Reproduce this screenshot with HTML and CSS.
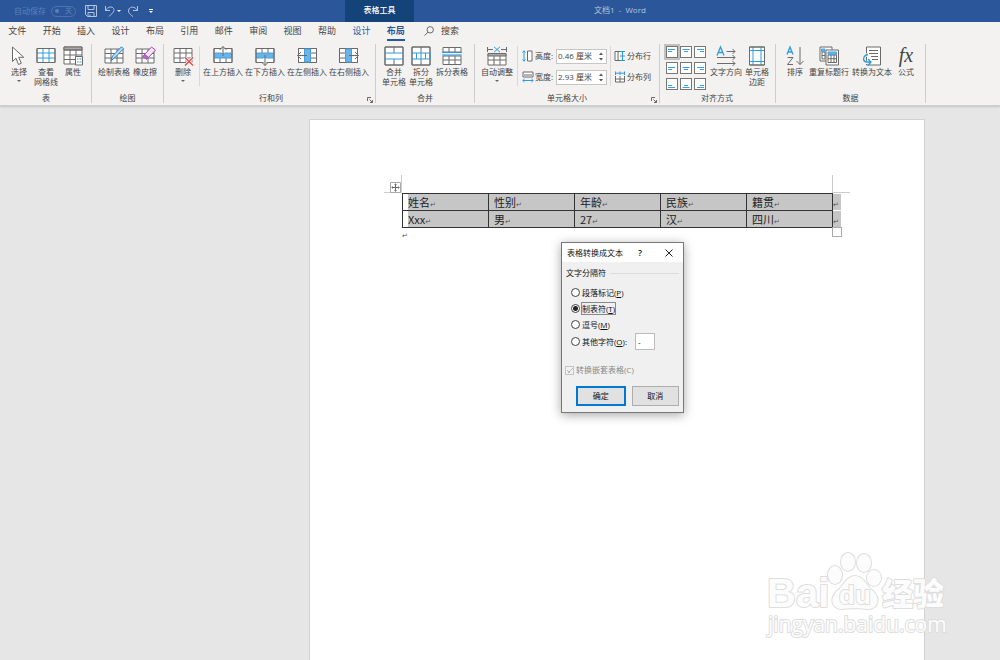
FILE: index.html
```html
<!DOCTYPE html>
<html lang="zh-CN">
<head>
<meta charset="utf-8">
<title>文档1 - Word</title>
<meta name="viewport" content="width=device-width">
<link rel="stylesheet" href="styles.css">
</head>
<body>
<header class="titlebar">
	<div class="quick">
		<span class="autosave">自动保存</span>
		<button class="toggle" aria-label="自动保存"><i></i>关</button>
		<button class="save" aria-label="保存"><svg width="12" height="12" viewBox="0 0 12 12"><path d="M.5.5h11v11h-9l-2-2zM3 .5v4h6v-4M3 11.500v-4h6v4M5 9.500v2"/></svg></button>
		<button class="undo" aria-label="撤消"><svg width="12" height="12" viewBox="0 0 12 12"><path d="M1.500 1v4.500h4.500M1.500 5.500C4 1.500 8 1 9.500 3.500s-.5 4-4.500 8"/></svg></button>
		<i class="caret"></i>
		<button class="redo" aria-label="恢复"><svg width="12" height="12" viewBox="0 0 12 12"><path d="M10.500 1v4.500H6M10.500 5.500C8 1.500 3.500 1 2 4s.5 5 4 7.500"/></svg></button>
		<button class="more" aria-label="自定义"><i class="caret"></i></button>
	</div>
	<div class="context">表格工具</div>
	<h1>文档1&nbsp; -&nbsp; Word</h1>
</header>
<nav class="tabs">
	<div class="tablist">
		<a href="#">文件</a>
		<a href="#">开始</a>
		<a href="#">插入</a>
		<a href="#">设计</a>
		<a href="#">布局</a>
		<a href="#">引用</a>
		<a href="#">邮件</a>
		<a href="#">审阅</a>
		<a href="#">视图</a>
		<a href="#">帮助</a>
		<a href="#" class="tool">设计</a>
		<a href="#" class="tool active">布局</a>
	</div>
	<a href="#" class="search"><svg width="10" height="10" viewBox="0 0 10 10"><circle cx="6.200" cy="3.800" r="3.200"/><path d="M4 6.200L.5 9.500"/></svg>搜索</a>
</nav>
<div class="ribbon">
	<section class="group g-table">
		<div class="tools">
			<button class="tool-btn"><svg viewBox="0 0 20 20"><path class="w" d="M3.500 1v14.500l3.500-3.300 2.500 6.300 2.800-1.200-2.600-6h5z"/></svg>选择<i class="caret"></i></button>
			<button class="tool-btn"><svg viewBox="0 0 20 20"><path class="w" d="M1 2.500h18v14H1z"/><path class="b" d="M7 2.500v14M13 2.500v14M1 7h18M1 12h18"/><path d="M1 2.500h18v14H1z"/></svg>查看<br>网格线</button>
			<button class="tool-btn"><svg viewBox="0 0 20 20"><path class="w" d="M1 1h18v17H1z"/><path class="gr" d="M1 1h18v3H1z"/><path d="M1 4h18M1 9h18M1 13.500h18M7 4v14M13 4v14"/><path class="w" d="M12.500 10.500h7v8.500h-7z"/><path class="b" d="M14 13h1.500M16.500 13h2M14 16h1.500M16.500 16h2"/></svg>属性</button>
		</div>
		<h2>表</h2>
	</section>
	<section class="group g-draw">
		<div class="tools">
			<button class="tool-btn"><svg viewBox="0 0 20 20"><path class="w" d="M1 3h18v14H1z"/><path d="M7 3v14M13 3v14M1 7.500h18M1 12h18"/><path class="bf" d="M7 14.500l1.500-4.500L17.500.8l2 2L10.500 12z"/></svg>绘制表格</button>
			<button class="tool-btn"><svg viewBox="0 0 20 20"><path class="w" d="M1 3h18v14H1z"/><path d="M7 3v14M13 3v14M1 7.500h18M1 12h18"/><path class="pu" d="M9.500 8.500l7-7.500 4 3-7 7.500z"/><path class="pf" d="M9.500 8.500l4 3-2 1.800-3.800-2.600z"/></svg>橡皮擦</button>
		</div>
		<h2>绘图</h2>
	</section>
	<section class="group g-rows">
		<div class="tools">
			<button class="tool-btn"><svg viewBox="0 0 20 20"><path class="w" d="M1 2.500h18v14H1z"/><path d="M7 2.500v14M13 2.500v14M1 7h18M1 12h18"/><path class="halo" d="M12 11.500l8 8M20 11.500l-8 8"/><path class="r" d="M12 11.500l8 8M20 11.500l-8 8"/></svg>删除<i class="caret"></i></button>
			<span class="rule"></span>
			<button class="tool-btn"><svg viewBox="0 0 20 20"><path class="w" d="M1 2.500h18v14H1z"/><path d="M7 12v4.500M13 12v4.500"/><path class="fill" d="M1.500 7h17v5h-17z"/><path class="halo" d="M10 0v7"/><path d="M7 2.500H1v14h18v-14h-6M10 10V.5M6.500 4L10 .5 13.500 4"/></svg>在上方插入</button>
			<button class="tool-btn"><svg viewBox="0 0 20 20"><path class="w" d="M1 2.500h18v14H1z"/><path d="M7 2.500V7M13 2.500V7"/><path class="fill" d="M1.500 7h17v5h-17z"/><path class="halo" d="M10 12v7"/><path d="M7 16.500H1v-14h18v14h-6M10 9v10.500M6.500 16l3.500 3.500 3.500-3.500"/></svg>在下方插入</button>
			<button class="tool-btn"><svg viewBox="0 0 20 20"><path class="w" d="M1.500 2.500h18v14h-18z"/><path d="M14 7h5.500M14 12h5.500M1.500 2.500h18v14h-18z"/><path class="fill" d="M7.500 3h6v13h-6z"/><path class="halo" d="M1 9.500h6"/><path d="M10 9.500H.5M4 6L.5 9.500 4 13"/></svg>在左侧插入</button>
			<button class="tool-btn"><svg viewBox="0 0 20 20"><path class="w" d="M.5 2.500h18v14H.5z"/><path d="M.5 7H6M.5 12H6M.5 2.500h18v14H.5z"/><path class="fill" d="M6.500 3h6v13h-6z"/><path class="halo" d="M13 9.500h6"/><path d="M10 9.500h9.500M16 6l3.500 3.500L16 13"/></svg>在右侧插入</button>
		</div>
		<h2>行和列</h2>
		<button class="launch" aria-label="表格选项"><svg width="6" height="6" viewBox="0 0 6 6"><path d="M.5 4V.5H4M2.500 2.500l3 3M5.500 3v2.500H3"/></svg></button>
	</section>
	<section class="group g-merge">
		<div class="tools">
			<button class="tool-btn"><svg viewBox="0 0 20 20"><path class="w" d="M1 1h18v18H1z"/><path d="M10 1v6M10 13v6M1 1h18v18H1z"/><path class="b" d="M1 7h18M1 13h18"/></svg>合并<br>单元格</button>
			<button class="tool-btn"><svg viewBox="0 0 20 20"><path class="w" d="M1 1h18v18H1z"/><path d="M10 1v6M10 13v6M1 1h18v18H1z"/><path class="b" d="M1 7h18v6H1M5.500 7v6M10 7v6M14.500 7v6"/></svg>拆分<br>单元格</button>
			<button class="tool-btn"><svg viewBox="0 0 20 20"><path class="w" d="M1 1.500h18V6H1zM1 10h18v8.500H1z"/><path d="M7 1.500V6M13 1.500V6M7 10v8.500M13 10v8.500M1 14h18"/><path class="b" d="M0 6.500h20M0 9h20"/></svg>拆分表格</button>
		</div>
		<h2>合并</h2>
	</section>
	<section class="group g-size">
		<div class="tools">
			<button class="tool-btn"><svg viewBox="0 0 20 20"><path class="w" d="M1 8h18v11H1z"/><path class="gr" d="M1 7.500h18v2.500H1z"/><path d="M7 10v9M13 10v9M1 14h18M.5 1v5M19.500 1v5M1 3.500h5M14 3.500h5"/><path class="b" d="M7 .8l6 5.400M13 .8L7 6.200"/></svg>自动调整<i class="caret"></i></button>
			<span class="rule"></span>
			<div class="sizes">
				<div class="size">
					<svg width="12" height="12" viewBox="0 0 12 12"><path class="w" d="M5.500 1h4.500v10H5.500z"/><path class="b" d="M2 .8v10.400M.5 2.500L2 .8l1.500 1.700M.5 9.500L2 11.200l1.500-1.700"/></svg>
					<label for="height">高度:</label>
					<span class="spin"><input id="height" type="text" value="0.46 厘米"><svg width="4" height="9" viewBox="0 0 4 9"><path d="M0 3l2-2.500L4 3zM0 6l2 2.500L4 6z"/></svg></span>
				</div>
				<div class="size">
					<svg width="12" height="12" viewBox="0 0 12 12"><path class="w" d="M1 6V1h10v5zM2 4h8"/><path class="b" d="M.8 9.500h10.400M2.500 8L.8 9.500l1.700 1.500M9.500 8l1.700 1.500L9.500 11"/></svg>
					<label for="width">宽度:</label>
					<span class="spin"><input id="width" type="text" value="2.93 厘米"><svg width="4" height="9" viewBox="0 0 4 9"><path d="M0 3l2-2.500L4 3zM0 6l2 2.500L4 6z"/></svg></span>
				</div>
			</div>
			<span class="rule"></span>
			<div class="sizes">
				<button class="dist"><svg width="12" height="12" viewBox="0 0 12 12"><path class="w" d="M6 1.500H1v9h5M4 1.500v9"/><path class="b" d="M6 1.500h5M6 6h5M6 10.500h5M8.500 1.500v9"/></svg>分布行</button>
				<button class="dist"><svg width="12" height="12" viewBox="0 0 12 12"><path class="w" d="M1.500 5v6h9V5M6 5v6M1.500 8h9"/><path class="b" d="M1.500.5V4M6 .5V4M10.500.5V4M1.500 2.200h9"/></svg>分布列</button>
			</div>
		</div>
		<h2>单元格大小</h2>
		<button class="launch" aria-label="表格属性"><svg width="6" height="6" viewBox="0 0 6 6"><path d="M.5 4V.5H4M2.500 2.500l3 3M5.500 3v2.500H3"/></svg></button>
	</section>
	<section class="group g-align">
		<div class="tools">
			<div class="aligns">
				<button class="on" aria-label="靠上左对齐"><svg viewBox="0 0 10 10"><path d="M1 2.500h7M1 4.500h4"/></svg></button>
				<button aria-label="靠上居中"><svg viewBox="0 0 10 10"><path d="M1.500 2.500h7M3 4.500h4"/></svg></button>
				<button aria-label="靠上右对齐"><svg viewBox="0 0 10 10"><path d="M2 2.500h7M5 4.500h4"/></svg></button>
				<button aria-label="中部左对齐"><svg viewBox="0 0 10 10"><path d="M1 4.500h7M1 6.500h4"/></svg></button>
				<button aria-label="水平居中"><svg viewBox="0 0 10 10"><path d="M1.500 4.500h7M3 6.500h4"/></svg></button>
				<button aria-label="中部右对齐"><svg viewBox="0 0 10 10"><path d="M2 4.500h7M5 6.500h4"/></svg></button>
				<button aria-label="靠下左对齐"><svg viewBox="0 0 10 10"><path d="M1 8.500h7M1 6.500h4"/></svg></button>
				<button aria-label="靠下居中"><svg viewBox="0 0 10 10"><path d="M1.500 8.500h7M3 6.500h4"/></svg></button>
				<button aria-label="靠下右对齐"><svg viewBox="0 0 10 10"><path d="M2 8.500h7M5 6.500h4"/></svg></button>
			</div>
			<button class="tool-btn"><svg viewBox="0 0 20 20"><path class="b bold" d="M1 9.500L4.500 1 8 9.500M2.200 6.500h4.600"/><path d="M10.500 5.500h8.500M16.500 3L19 5.500 16.500 8M1 11.500h18M16.500 9l2.500 2.500-2.500 2.500M1 17.500h18M16.500 15l2.500 2.500-2.500 2.500"/></svg>文字方向</button>
			<button class="tool-btn"><svg viewBox="0 0 20 20"><path class="w" d="M2.500 1h15v18h-15z"/><path class="b" d="M6 1v18M14 1v18M2.500 4.500h15M2.500 15.500h15"/><path d="M2.500 1h15v18h-15z"/></svg>单元格<br>边距</button>
		</div>
		<h2>对齐方式</h2>
	</section>
	<section class="group g-data">
		<div class="tools">
			<button class="tool-btn"><svg viewBox="0 0 20 20"><path class="b bold" d="M2 8.500L5 1l3 7.500M3 6h4"/><path d="M2.500 11.500h5.500l-5.500 7H8M15 1v17.500M11.500 15l3.500 3.500 3.500-3.500"/></svg>排序</button>
			<button class="tool-btn"><svg viewBox="0 0 20 20"><path class="w" d="M1 1h12v14H1z"/><path d="M3 6h3v7H3zM3 9.500h3"/><path class="fill" d="M2.500 3h3.500v2.500H2.500z"/><path class="w" d="M7 4h12.500v15H7z"/><path d="M9 9h8.500v7.500H9zM9 12.700h8.500M12 9v7.500M15 9v7.500"/><path class="fill" d="M9 6h8.500v2.500H9z"/></svg>重复标题行</button>
			<button class="tool-btn"><svg viewBox="0 0 20 20"><path class="w" d="M4.500 1h14v18h-14z"/><path d="M7 4.500h9M7 7.500h9M9 10.500h7M10 13.500h6"/><path class="halo" d="M6 8.500C1 9.500 0 15 4.500 16.500h4"/><path class="b bold" d="M6 8.500C1 9.500 0 15 4.500 16h4M6 13l3 3-3 3.500"/></svg>转换为文本</button>
			<button class="tool-btn"><span class="fx">fx</span>公式</button>
		</div>
		<h2>数据</h2>
	</section>
</div>
<main class="canvas">
	<article class="page">
		<div class="doc-table">
			<table>
				<tr><td><span>姓名<i>↵</i></span></td><td>性别<i>↵</i></td><td>年龄<i>↵</i></td><td>民族<i>↵</i></td><td>籍贯<i>↵</i></td><td class="end"><i>↵</i></td></tr>
				<tr><td><span>Xxx<i>↵</i></span></td><td>男<i>↵</i></td><td>27<i>↵</i></td><td>汉<i>↵</i></td><td>四川<i>↵</i></td><td class="end"><i>↵</i></td></tr>
			</table>
			<span class="corner left"></span>
			<span class="corner right"></span>
			<svg class="move" width="11" height="11" viewBox="0 0 11 11"><path class="frame" d="M.5.5h10v10H.5z"/><path d="M5.500 1.500v8M1.500 5.500h8M4.500 2.500h2M4.500 8.500h2M2.500 4.500v2M8.500 4.500v2"/></svg>
			<span class="resize"></span>
		</div>
		<p class="para"><i>↵</i></p>
	</article>
	<form class="dialog">
		<header>
			<h3>表格转换成文本</h3>
			<button type="button" aria-label="帮助" class="help">?</button>
			<button type="button" aria-label="关闭"><svg width="8" height="8" viewBox="0 0 8 8"><path d="M.5.5l7 7M7.500.5l-7 7"/></svg></button>
		</header>
		<fieldset>
			<legend>文字分隔符</legend>
			<div class="opt"><input type="radio" name="sep" id="sep-p"><label for="sep-p">段落标记(<u>P</u>)</label></div>
			<div class="opt"><input type="radio" name="sep" id="sep-t" checked><label for="sep-t" class="focus">制表符(<u>T</u>)</label></div>
			<div class="opt"><input type="radio" name="sep" id="sep-m"><label for="sep-m">逗号(<u>M</u>)</label></div>
			<div class="opt"><input type="radio" name="sep" id="sep-o"><label for="sep-o">其他字符(<u>O</u>):</label><input type="text" class="char" value="-" aria-label="其他字符"></div>
		</fieldset>
		<div class="nested"><input type="checkbox" id="nested" checked disabled><label for="nested">转换嵌套表格(C)</label></div>
		<div class="buttons">
			<button type="button" class="ok">确定</button>
			<button type="button">取消</button>
		</div>
	</form>
	<svg class="mark" width="184" height="92" viewBox="0 0 184 92">
		<g class="outline">
			<text class="bai" x="3" y="59">Bai</text>
			<ellipse cx="71" cy="27" rx="7" ry="9"/>
			<ellipse cx="84" cy="14" rx="7" ry="9"/>
			<ellipse cx="100" cy="15" rx="7" ry="9"/>
			<ellipse cx="110" cy="30" rx="7" ry="8"/>
			<path d="M91 28c9 0 11 10 18 15 8 8 5 18-5 18-5-1-21-1-26 0-10 0-13-10-5-18 7-5 9-15 18-15z"/>
			<text class="du" x="75" y="56">du</text>
			<text class="jy" x="118" y="57">经验</text>
			<text class="url" x="4" y="84">jingyan.baidu.com</text>
		</g>
	</svg>
</main>
</body>
</html>
```
FILE: styles.css
```css
* {
	box-sizing:border-box;
}
body {
	margin:0;
	min-height:100vh;
	display:flex;
	flex-direction:column;
	background:#e6e6e6;
	color:#444;
	font:400 8px/10px "Open Sans", "Noto Sans CJK SC", sans-serif;
}
button, input {
	font:inherit;
	color:inherit;
	margin:0;
	padding:0;
	border:0;
	background:none;
}
h1, h2, h3, p {
	margin:0;
	font-size:inherit;
	font-weight:400;
}
a {
	color:inherit;
	text-decoration:none;
}
i {
	font-style:normal;
}
svg {
	display:block;
	fill:none;
	stroke:#6a6a6a;
	overflow:visible;
}
.caret {
	display:block;
	width:0;
	border:2px solid transparent;
	border-top-color:#666;
	border-bottom:0;
}

/* title bar */
.titlebar {
	display:flex;
	align-items:stretch;
	height:22px;
	background:#2b579a;
	color:#b4c4de;
}
.quick {
	display:flex;
	align-items:center;
	width:345px;
	padding-left:14px;
}
.quick svg {
	stroke:#b4c4de;
}
.quick .caret {
	border-top-color:#fff;
}
.autosave {
	color:#5c80b8;
}
.toggle {
	display:flex;
	align-items:center;
	justify-content:space-between;
	width:25px;
	height:11px;
	margin:0 9px 0 5px;
	padding:0 3px;
	border:1px solid #4c73ae;
	border-radius:6px;
	color:#5c80b8;
	font-size:7px;
}
.toggle i {
	width:4px;
	height:4px;
	border-radius:50%;
	background:#5c80b8;
}
.undo {
	margin:0 1px 0 7px;
}
.redo {
	margin:0 10px 0 6px;
}
.more {
	padding-top:2px;
}
.more .caret {
	position:relative;
}
.more .caret::before {
	content:"";
	position:absolute;
	left:-2px;
	top:-4px;
	width:4px;
	height:1px;
	background:#fff;
}
.context {
	display:flex;
	align-items:center;
	justify-content:center;
	width:69px;
	padding-bottom:3px;
	background:#144379;
	color:#fff;
	font-weight:500;
}
.titlebar h1 {
	align-self:center;
	padding-bottom:3px;
	margin-left:180px;
}

/* tabs */
.tabs {
	display:flex;
	height:20px;
	background:#f3f2f1;
	font-size:9px;
	line-height:18px;
}
.tablist {
	display:flex;
	width:413px;
}
.tablist a {
	flex:1;
	text-align:center;
}
.tablist .tool {
	color:#2b579a;
}
.tablist .active {
	font-weight:700;
	background:linear-gradient(#2b579a, #2b579a) center bottom 1px / 18px 2px no-repeat;
}
.search {
	display:flex;
	align-items:center;
	gap:7px;
	height:18px;
	margin-left:11px;
}

/* ribbon */
.ribbon {
	display:flex;
	height:64px;
	padding:2px 0;
	background:#f3f2f1;
	border-bottom:1px solid #cfcecd;
	box-shadow:0 1px 2px rgba(0,0,0,.15);
	z-index:1;
}
.group {
	position:relative;
	display:flex;
	flex-direction:column;
	justify-content:space-between;
	border-right:1px solid #cfcdcb;
	padding:2px 6px 0;
}
.g-table {
	padding-left:9px;
	padding-right:8px;
}
.g-rows {
	padding-left:9px;
}
.g-size {
	padding-left:6px;
}
.g-size .tools {
	padding-right:2px;
}
.g-align {
	padding-left:5px;
}
.g-data {
	padding-left:8px;
	padding-right:8px;
}
.group h2 {
	text-align:center;
}
.tools {
	display:flex;
	gap:3px;
}
.g-table .tools {
	gap:5px;
}
.g-rows .tools {
	gap:2px;
}
.tool-btn {
	display:flex;
	flex-direction:column;
	align-items:center;
	min-width:20px;
	height:42px;
	line-height:10px;
	white-space:nowrap;
}
.g-data .tool-btn {
	min-width:22px;
}
.tool-btn svg {
	width:20px;
	height:20px;
	margin-bottom:1px;
}
.tool-btn .caret {
	margin-top:3px;
}
.rule {
	width:1px;
	height:40px;
	background:#dad8d6;
}
.tool-btn + .rule {
	margin:0 1px;
}
.g-rows .tool-btn + .rule {
	margin-left:4px;
}
.w {
	fill:#fff;
}
.gr {
	fill:#aaa;
}
.b {
	stroke:#2e9bdf;
}
.bold {
	stroke-width:1.3px;
}
.bf {
	stroke:#2e7fc0;
	fill:#b5dcf5;
}
.fill {
	stroke:#4a9fd8;
	fill:#69b4ea;
}
.halo {
	stroke:#f3f2f1;
	stroke-width:3px;
}
.r {
	stroke:#f04545;
	stroke-width:1.3px;
}
.pu {
	stroke:#a14fb5;
	fill:#f5e4f8;
}
.pf {
	stroke:#a14fb5;
	fill:#b96aca;
}
.fx {
	height:21px;
	font:italic 20px/18px "Liberation Serif", serif;
}
.launch {
	position:absolute;
	right:2px;
	bottom:0;
}
.sizes {
	display:flex;
	flex-direction:column;
	gap:5px;
	padding-top:2px;
}
.size, .dist {
	display:flex;
	align-items:center;
	height:16px;
}
.size label {
	width:22px;
	padding-left:1px;
}
.size svg {
	flex:none;
}
.dist {
	gap:1px;
}
.spin {
	display:flex;
	align-items:center;
	width:51px;
	height:15px;
	background:#fff;
	border:1px solid #c8c6c4;
}
.spin input {
	width:42px;
	padding-left:1px;
}
.spin svg {
	fill:#555;
	stroke:none;
}
.aligns {
	display:grid;
	grid-template-columns:repeat(3, 12px);
	gap:4px 2px;
	padding:0 1px;
}
.aligns button {
	width:12px;
	height:12px;
	border:1px solid #777;
	background:#fff;
}
.aligns .on {
	box-shadow:0 0 0 2px #c4c2c0;
}
.aligns svg {
	width:10px;
	height:10px;
	stroke:#3e9fe0;
}

/* document */
.canvas {
	position:relative;
	flex:1;
	display:flex;
	padding:13px 75px 0 0;
}
.page {
	width:616px;
	margin-left:auto;
	padding:73px 92px 0;
	background:#fff;
	border:1px solid #d2d2d2;
	border-bottom:0;
}
.doc-table {
	position:relative;
	width:430px;
}
.doc-table table {
	border-collapse:collapse;
	table-layout:fixed;
	width:438px;
	color:#222;
	font:400 11px/16px "Noto Sans CJK SC", sans-serif;
}
.doc-table td {
	width:86px;
	height:17px;
	padding:0 0 0 5px;
	border:1px solid #333;
	background:#c6c6c6;
}
.doc-table td:first-child {
	background:#fff;
}
.doc-table td:first-child span {
	display:block;
	background:#c6c6c6;
}
.doc-table td.end {
	width:8px;
	padding:0;
	border-width:1px 0;
	border-color:#fff;
	border-left:1px solid #333;
}
.doc-table i, .para i {
	color:#555;
	font:400 7px/10px "DejaVu Sans", sans-serif;
}
.corner {
	position:absolute;
	top:-18px;
	width:18px;
	height:18px;
	border-bottom:1px solid #ccc;
}
.corner.left {
	left:-18px;
	border-right:1px solid #ccc;
}
.corner.right {
	left:430px;
	border-left:1px solid #ccc;
}
.move {
	position:absolute;
	left:-12px;
	top:-11px;
}
.move .frame {
	fill:#fff;
	stroke:#aaa;
}
.resize {
	position:absolute;
	left:430px;
	top:34px;
	width:10px;
	height:10px;
	background:#fff;
	border:1px solid #aaa;
}
.para {
	line-height:12px;
	padding-top:1px;
}

/* convert dialog */
.dialog {
	position:absolute;
	left:561px;
	top:136px;
	width:123px;
	height:171px;
	background:#f0f0f0;
	border:1px solid #777;
	box-shadow:0 2px 10px rgba(0,0,0,.35);
	color:#111;
}
.dialog header {
	display:flex;
	align-items:center;
	height:19px;
	padding-left:5px;
	background:#fff;
}
.dialog header h3 {
	width:64px;
}
.dialog header button {
	width:18px;
}
.dialog header button + button {
	margin-left:11px;
}
.dialog .help {
	font-size:9px;
	font-weight:600;
}
.dialog header svg {
	margin:auto;
	stroke:#222;
}
fieldset {
	margin:0;
	padding:0 4px;
	border:0;
}
legend {
	display:flex;
	align-items:center;
	gap:4px;
	width:100%;
	height:22px;
	padding:0;
}
legend::after {
	content:"";
	flex:1;
	height:1px;
	background:#dcdcdc;
}
.opt {
	display:flex;
	align-items:center;
	gap:1px;
	height:16px;
	padding-left:5px;
}
.opt:last-child {
	height:19px;
}
.opt label {
	border:1px solid transparent;
	line-height:11px;
}
.opt .focus {
	border:1px solid #888;
}
.opt input[type=radio] {
	appearance:none;
	width:9px;
	height:9px;
	border:1px solid #444;
	border-radius:50%;
	background:#fff;
}
.opt input[type=radio]:checked {
	background:radial-gradient(#222 2px, #fff 3px);
}
.char {
	width:20px;
	height:17px;
	margin-left:6px;
	padding-left:2px;
	background:#fff;
	border:1px solid #bbb;
}
.nested {
	display:flex;
	align-items:center;
	gap:2px;
	margin-top:14px;
	padding-left:3px;
	color:#888;
}
.nested input {
	appearance:none;
	width:9px;
	height:9px;
	border:1px solid #c4c4c4;
	background:
		linear-gradient(45deg, transparent 45%, #bbb 45% 58%, transparent 58%) 1px 3px / 3px 3px no-repeat,
		linear-gradient(-45deg, transparent 42%, #bbb 42% 58%, transparent 58%) 2px 1px / 5px 5px no-repeat;
}
.buttons {
	display:flex;
	gap:6px;
	margin-top:11px;
	padding:0 4px 0 14px;
}
.buttons button {
	flex:1;
	height:20px;
	background:#e1e1e1;
	border:1px solid #adadad;
}
.buttons .ok {
	border:2px solid #0078d7;
}

/* watermark */
.mark {
	position:absolute;
	right:52px;
	bottom:20px;
}
.outline {
	fill:#fcfcfc;
	stroke:#dedede;
	stroke-width:2px;
	stroke-linejoin:round;
	paint-order:stroke;
	font-family:"Open Sans", "Noto Sans CJK SC", sans-serif;
}
.bai, .du {
	font-family:"Liberation Sans", sans-serif;
	font-weight:700;
	font-size:40px;
}
.du {
	font-size:26px;
}
.jy {
	font-size:31px;
	font-weight:900;
}
.url {
	font-size:21px;
}
```
